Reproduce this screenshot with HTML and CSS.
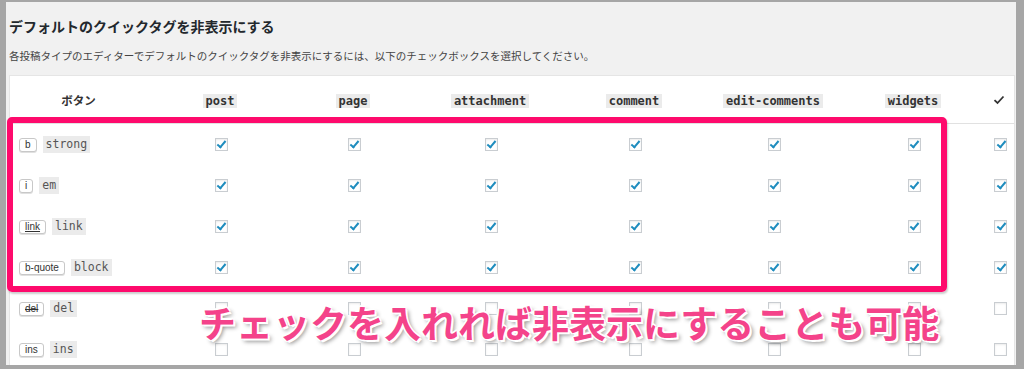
FILE: index.html
```html
<!DOCTYPE html>
<html>
<head>
    <title>クイックタグ設定</title>
    <link rel="stylesheet" href="styles.css">
</head>
<body>
    <div class="frame">
        <div class="intro">
            <h2>デフォルトのクイックタグを非表示にする</h2>
            <p>各投稿タイプのエディターでデフォルトのクイックタグを非表示にするには、以下のチェックボックスを選択してください。</p>
        </div>

        <div class="table">
            <div class="row head">
                <div class="name">ボタン</div>
                <div><code>post</code></div>
                <div><code>page</code></div>
                <div><code>attachment</code></div>
                <div><code>comment</code></div>
                <div><code>edit-comments</code></div>
                <div><code>widgets</code></div>
                <div>
                    <svg class="all" width="12" height="10" viewBox="0 0 12 10"><path d="M1.5 5.2 L4.5 8 L10.5 1.5" fill="none" stroke="#333" stroke-width="1.8"/></svg>
                </div>
            </div>

            <div class="row">
                <div class="name"><span class="btn">b</span><code>strong</code></div>
                <div><input type="checkbox" checked></div>
                <div><input type="checkbox" checked></div>
                <div><input type="checkbox" checked></div>
                <div><input type="checkbox" checked></div>
                <div><input type="checkbox" checked></div>
                <div><input type="checkbox" checked></div>
                <div><input type="checkbox" checked></div>
            </div>
            <div class="row">
                <div class="name"><span class="btn">i</span><code>em</code></div>
                <div><input type="checkbox" checked></div>
                <div><input type="checkbox" checked></div>
                <div><input type="checkbox" checked></div>
                <div><input type="checkbox" checked></div>
                <div><input type="checkbox" checked></div>
                <div><input type="checkbox" checked></div>
                <div><input type="checkbox" checked></div>
            </div>
            <div class="row">
                <div class="name"><span class="btn link">link</span><code>link</code></div>
                <div><input type="checkbox" checked></div>
                <div><input type="checkbox" checked></div>
                <div><input type="checkbox" checked></div>
                <div><input type="checkbox" checked></div>
                <div><input type="checkbox" checked></div>
                <div><input type="checkbox" checked></div>
                <div><input type="checkbox" checked></div>
            </div>
            <div class="row">
                <div class="name"><span class="btn">b-quote</span><code>block</code></div>
                <div><input type="checkbox" checked></div>
                <div><input type="checkbox" checked></div>
                <div><input type="checkbox" checked></div>
                <div><input type="checkbox" checked></div>
                <div><input type="checkbox" checked></div>
                <div><input type="checkbox" checked></div>
                <div><input type="checkbox" checked></div>
            </div>
            <div class="row">
                <div class="name"><span class="btn del">del</span><code>del</code></div>
                <div><input type="checkbox"></div>
                <div><input type="checkbox"></div>
                <div><input type="checkbox"></div>
                <div><input type="checkbox"></div>
                <div><input type="checkbox"></div>
                <div><input type="checkbox"></div>
                <div><input type="checkbox"></div>
            </div>
            <div class="row">
                <div class="name"><span class="btn">ins</span><code>ins</code></div>
                <div><input type="checkbox"></div>
                <div><input type="checkbox"></div>
                <div><input type="checkbox"></div>
                <div><input type="checkbox"></div>
                <div><input type="checkbox"></div>
                <div><input type="checkbox"></div>
                <div><input type="checkbox"></div>
            </div>
        </div>

        <!-- annotation layer -->
        <div class="highlight"></div>
        <div class="note">チェックを入れれば非表示にすることも可能</div>
    </div>
</body>
</html>
```

FILE: styles.css
```css
body {
    margin: 0;
    background-color: #a6a6a6;
    font-family: "Liberation Sans", "Noto Sans CJK JP", sans-serif;
    color: #23282d;
}
.frame {
    position: relative;
    width: 1010px;
    height: 363px;
    margin: 2px 0 0 6px;
    background-color: #f1f1f1;
    overflow: hidden;
}
.intro {
    height: 73px;
    padding: 14px 0 0 3px;
    box-sizing: border-box;
}
.intro h2 {
    margin: 0;
    font-family: "Noto Sans CJK JP", sans-serif;
    font-size: 14px;
    line-height: 20px;
    font-weight: bold;
    color: #23282d;
}
.intro p {
    margin: 12px 0 0 0;
    font-family: "Noto Sans CJK JP", sans-serif;
    font-size: 10.5px;
    line-height: 16px;
    color: #444;
}
.table {
    width: 1004px;
    height: 500px;
    margin-left: 3px;
    background-color: #fff;
    border: 1px solid #e5e5e5;
}
.row {
    display: grid;
    grid-template-columns: 141px 138px 128px 146px 142px 136px 144px 29px;
    height: 41px;
    align-items: center;
    justify-items: center;
}
.row.head {
    height: 47px;
    border-bottom: 1px solid #e1e1e1;
}
.row .name {
    justify-self: start;
    display: flex;
    align-items: center;
    gap: 6px;
    padding-left: 9px;
}
.row.head .name {
    justify-self: center;
    padding: 0 4px 0 0;
    font-family: "Noto Sans CJK JP", sans-serif;
    font-size: 11.5px;
    font-weight: bold;
    color: #333;
}
code {
    font-family: "DejaVu Sans Mono", monospace;
    font-size: 11.5px;
    line-height: 17px;
    padding: 0 3px;
    background-color: #ebebeb;
    color: #555;
}
.head code {
    font-size: 12px;
    line-height: 16px;
    font-weight: bold;
    color: #333;
}
.all {
    display: block;
    margin: 0 2px 0 0;
}
.btn {
    display: inline-block;
    height: 12px;
    padding: 0 5px;
    border: 1px solid #c8c8c8;
    border-radius: 3px;
    background-color: #fff;
    box-shadow: 0 1px 0 #e0e0e0;
    font-size: 10px;
    line-height: 12px;
    color: #333;
}
.btn.link {
    text-decoration: underline;
}
.btn.del {
    text-decoration: line-through;
}
input[type="checkbox"] {
    appearance: none;
    position: relative;
    width: 13px;
    height: 13px;
    margin: 3px 0 0 2px;
    border: 1px solid #c9cdd1;
    background-color: #fff;
    box-shadow: inset 0 1px 2px rgba(0, 0, 0, 0.08);
    box-sizing: border-box;
}
input[type="checkbox"]:checked::before {
    content: "";
    position: absolute;
    left: 3.5px;
    top: 0.5px;
    width: 3px;
    height: 7px;
    border: solid #1e8cbe;
    border-width: 0 2.5px 2.5px 0;
    transform: rotate(40deg);
}
.highlight {
    position: absolute;
    left: 1px;
    top: 115px;
    width: 940px;
    height: 175px;
    box-sizing: border-box;
    border: 6px solid #fe0a6c;
    border-radius: 5px;
    box-shadow: 1px 2px 2px rgba(0, 0, 0, 0.2);
}
.note {
    position: absolute;
    left: 193px;
    top: 299px;
    font-family: "Noto Sans CJK JP", sans-serif;
    font-size: 37px;
    line-height: 42px;
    font-weight: bold;
    letter-spacing: 0;
    color: #f4438a;
    white-space: nowrap;
    text-shadow: -1px -1px 0 #fff, 1px -1px 0 #fff, -1px 1px 0 #fff, 1px 1px 0 #fff,
        2px 2px 0 #fff, 0 -2px 0 #fff, -2px 0 0 #fff, 3px 3px 4px rgba(0, 0, 0, 0.45);
}
```
